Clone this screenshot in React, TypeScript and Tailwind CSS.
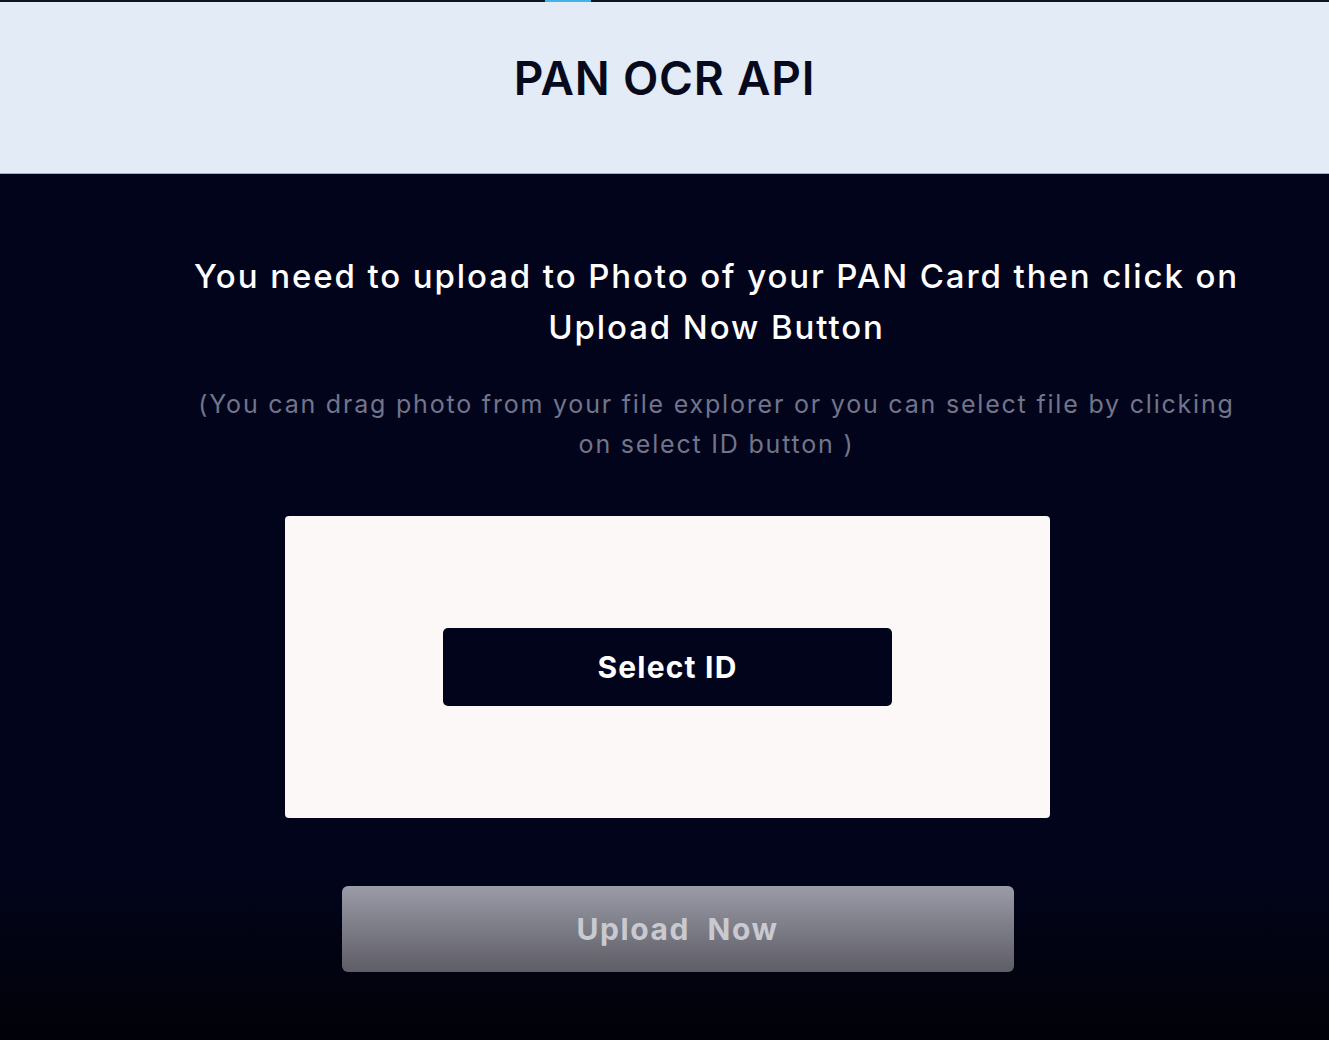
const App = () => {
  return (
    <div className="w-full h-[1040px] flex flex-col overflow-hidden font-['Inter',_'Open_Sans',_sans-serif]">
      {/* top strip */}
      <div className="h-[2px] bg-[#0d1424] flex">
        <div className="ml-[545px] w-[46px] bg-[#3fb3ea]" />
      </div>

      {/* header */}
      <div className="h-[172px] bg-[#e2ebf6] flex items-start justify-center pt-[42px] border-b border-[#a9aebb]">
        <h1 className="text-[46px] font-semibold text-[#070a1c] tracking-[0.8px]">PAN OCR API</h1>
      </div>

      {/* body */}
      <div className="flex-1 bg-gradient-to-b from-[#02041c] from-80% to-[#010208] flex flex-col items-center">
        <div className="pl-[104px] pt-[77px] flex flex-col items-center text-center">
          <p className="text-[33px] leading-[51px] font-medium text-white tracking-[1.9px] w-[1200px]">
            You need to upload to Photo of your PAN Card then click on
            <br />
            Upload Now Button
          </p>
          <p className="mt-[31px] text-[25px] leading-[40px] text-[#72758a] tracking-[1.8px] w-[1200px]">
            (You can drag photo from your file explorer or you can select file by clicking
            <br />
            on select ID button )
          </p>
        </div>

        <div className="mt-[52px] ml-[6px] w-[765px] h-[302px] bg-[#fcf8f7] rounded-[4px] flex items-center justify-center">
          <button className="w-[449px] h-[78px] bg-[#02041c] rounded-[5px] text-white text-[30px] font-bold tracking-[1.2px]">
            Select ID
          </button>
        </div>

        <button className="mt-[68px] ml-[26px] w-[672px] h-[86px] rounded-[6px] bg-gradient-to-b from-[#9b9ca8] to-[#5e5d66] text-[#c9c9d1] text-[30px] font-bold tracking-[1.6px]">
          Upload&nbsp; Now
        </button>
      </div>
    </div>
  );
};

export default App;
